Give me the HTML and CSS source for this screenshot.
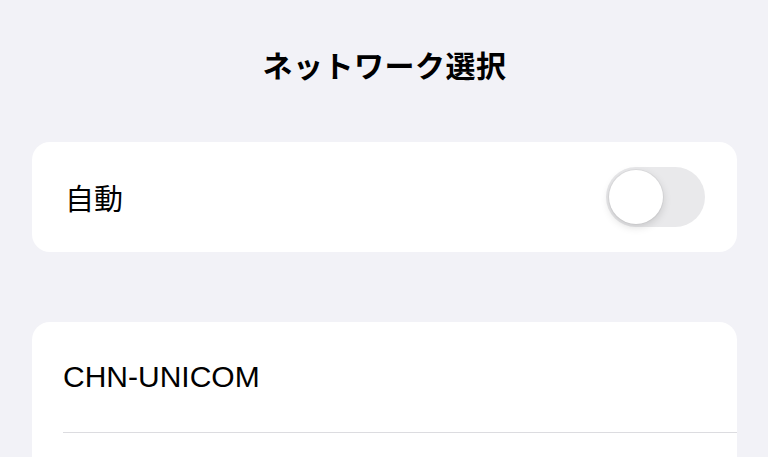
FILE: index.html
```html
<!DOCTYPE html>
<html lang="ja">
<head>
  <meta charset="UTF-8" />
  <meta name="viewport" content="width=device-width, initial-scale=1.0"/>
  <title>ネットワーク選択</title>
  <link rel="stylesheet" href="styles.css">
</head>
<body>
  <div class="page">
    <h1 class="title">ネットワーク選択</h1>

    <div class="group">
      <div class="row">
        <div class="label">自動</div>
        <div class="toggle">
          <div class="knob"></div>
        </div>
      </div>
    </div>

    <div class="group group-list">
      <div class="row row-network">
        <div class="label label-latin">CHN-UNICOM</div>
      </div>
      <div class="row row-network"></div>
    </div>
  </div>
</body>
</html>
```

FILE: styles.css
```css
html, body {
  margin: 0;
  height: 100%;
  overflow: hidden;
}

body {
  font-family: "Noto Sans CJK JP", "Liberation Sans", sans-serif;
  background-color: #f2f2f7;
  color: #000;
}

.page {
  padding: 0 31px 0 32px;
}

.title {
  margin: 49px 0 0;
  font-size: 30px;
  line-height: 30px;
  font-weight: 700;
  text-align: center;
  letter-spacing: 0.5px;
}

.group {
  background: #fff;
  border-radius: 18px;
  margin-top: 63px;
}

.group-list {
  margin-top: 70px;
}

.row {
  display: flex;
  align-items: center;
  justify-content: space-between;
  height: 110px;
  padding: 0 32px 0 33px;
}

.row-network {
  padding-left: 0;
  margin-left: 31px;
  padding-right: 0;
}

.row-network + .row-network {
  border-top: 1px solid #dcdce0;
}

.label {
  font-size: 29px;
  font-weight: 400;
}

.label-latin {
  font-family: "Liberation Sans", sans-serif;
  font-size: 30px;
}

.toggle {
  width: 99px;
  height: 60px;
  border-radius: 30px;
  background: #e9e9eb;
  display: flex;
  align-items: center;
  padding: 0 3px;
  box-sizing: border-box;
}

.knob {
  width: 54px;
  height: 54px;
  border-radius: 50%;
  background: #fff;
  box-shadow: 0 3px 8px rgba(0,0,0,0.15), 0 0 0 1px rgba(0,0,0,0.04);
}
```
